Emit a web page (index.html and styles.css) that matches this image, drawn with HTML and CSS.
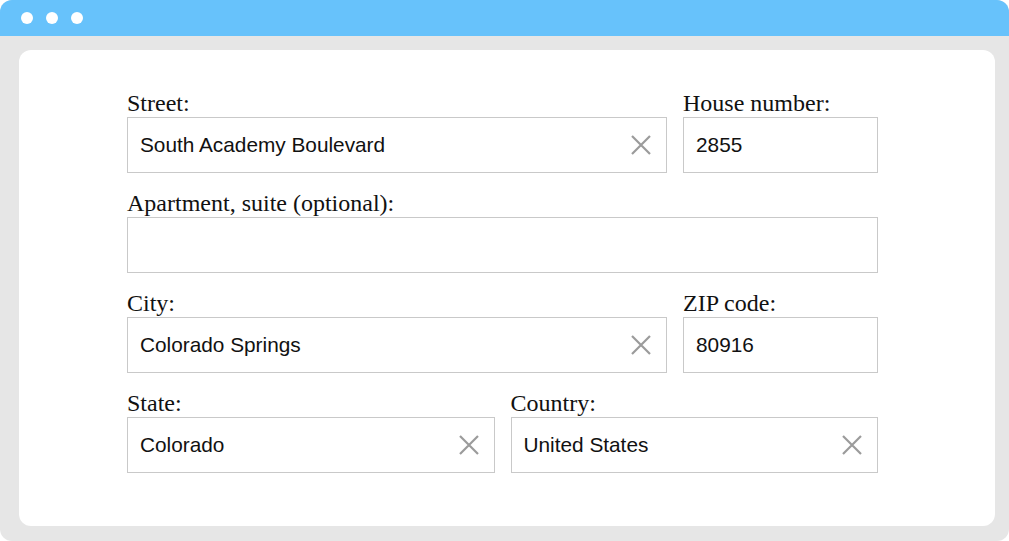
FILE: index.html
```html
<!DOCTYPE html>
<html lang="en">
<head>
    <meta charset="UTF-8">
    <meta name="viewport" content="width=device-width, initial-scale=1.0">
    <title>Address form</title>
    <link rel="stylesheet" href="styles.css">
</head>
<body>
    <div class="window">
        <div class="titlebar">
            <span class="dot"></span>
            <span class="dot"></span>
            <span class="dot"></span>
        </div>

        <div class="window-body">
            <div class="card">
                <form class="address-form">
                    <div class="row">
                        <div class="field grow">
                            <label for="street">Street:</label>
                            <div class="input-box">
                                <input type="text" id="street" value="South Academy Boulevard">
                                <button type="button" class="clear" aria-label="Clear">
                                    <svg width="22" height="22" viewBox="0 0 22 22"><path d="M2 2 L20 20 M20 2 L2 20"/></svg>
                                </button>
                            </div>
                        </div>
                        <div class="field narrow">
                            <label for="house">House number:</label>
                            <div class="input-box">
                                <input type="text" id="house" value="2855">
                            </div>
                        </div>
                    </div>

                    <div class="row">
                        <div class="field grow">
                            <label for="apartment">Apartment, suite (optional):</label>
                            <div class="input-box">
                                <input type="text" id="apartment" value="">
                            </div>
                        </div>
                    </div>

                    <div class="row">
                        <div class="field grow">
                            <label for="city">City:</label>
                            <div class="input-box">
                                <input type="text" id="city" value="Colorado Springs">
                                <button type="button" class="clear" aria-label="Clear">
                                    <svg width="22" height="22" viewBox="0 0 22 22"><path d="M2 2 L20 20 M20 2 L2 20"/></svg>
                                </button>
                            </div>
                        </div>
                        <div class="field narrow">
                            <label for="zip">ZIP code:</label>
                            <div class="input-box">
                                <input type="text" id="zip" value="80916">
                            </div>
                        </div>
                    </div>

                    <div class="row halves">
                        <div class="field">
                            <label for="state">State:</label>
                            <div class="input-box">
                                <input type="text" id="state" value="Colorado">
                                <button type="button" class="clear" aria-label="Clear">
                                    <svg width="22" height="22" viewBox="0 0 22 22"><path d="M2 2 L20 20 M20 2 L2 20"/></svg>
                                </button>
                            </div>
                        </div>
                        <div class="field">
                            <label for="country">Country:</label>
                            <div class="input-box">
                                <input type="text" id="country" value="United States">
                                <button type="button" class="clear" aria-label="Clear">
                                    <svg width="22" height="22" viewBox="0 0 22 22"><path d="M2 2 L20 20 M20 2 L2 20"/></svg>
                                </button>
                            </div>
                        </div>
                    </div>
                </form>
            </div>
        </div>
    </div>
</body>
</html>
```

FILE: styles.css
```css
html, body {
    margin: 0;
    padding: 0;
    background: #ffffff;
}
.window {
    width: 1009px;
    height: 541px;
    background-color: #e6e6e6;
    border-radius: 12px;
    overflow: hidden;
    display: flex;
    flex-direction: column;
}
.titlebar {
    height: 36px;
    flex: none;
    background-color: #67c2fb;
    display: flex;
    align-items: center;
    gap: 13px;
    padding-left: 21px;
}
.dot {
    width: 12px;
    height: 12px;
    border-radius: 50%;
    background-color: #ffffff;
}
.window-body {
    flex: 1;
    padding: 14px 14px 15px 19px;
    display: flex;
}
.card {
    flex: 1;
    background-color: #ffffff;
    border-radius: 12px;
    padding: 39px 0 0 108px;
}
.address-form {
    width: 751px;
    display: flex;
    flex-direction: column;
    gap: 16px;
}
.row {
    display: flex;
    gap: 16px;
}
.row.halves .field {
    flex: 1;
}
.field {
    display: flex;
    flex-direction: column;
    min-width: 0;
}
.field.grow {
    flex: 1;
}
.field.narrow {
    width: 195px;
    flex: none;
}
label {
    font-family: "Liberation Serif", "Times New Roman", serif;
    font-size: 24px;
    line-height: 28px;
    color: #111;
}
.input-box {
    height: 56px;
    box-sizing: border-box;
    border: 1px solid #c9c9c9;
    display: flex;
    align-items: center;
    padding: 0 14px 0 12px;
}
.input-box input {
    flex: 1;
    min-width: 0;
    border: none;
    outline: none;
    padding: 0;
    background: transparent;
    font-family: "Liberation Sans", Arial, sans-serif;
    font-size: 20.8px;
    color: #111;
}
.clear {
    border: none;
    background: none;
    padding: 0;
    width: 22px;
    height: 22px;
    cursor: pointer;
    display: flex;
}
.clear path {
    stroke: #9b9b9b;
    stroke-width: 2.2;
    fill: none;
}
```
